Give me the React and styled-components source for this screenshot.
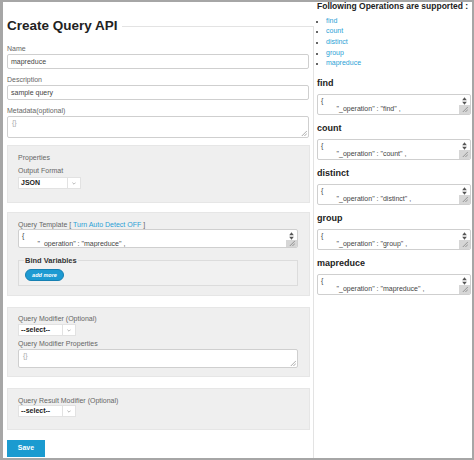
import React from 'react';
import styled, { createGlobalStyle } from 'styled-components';

const GlobalStyle = createGlobalStyle`
  html, body {
    margin: 0;
    padding: 0;
    background: #fff;
  }
  body {
    font-family: "Liberation Sans", Arial, sans-serif;
  }
  * {
    box-sizing: border-box;
  }
`;

const Frame = styled.div`
  width: 474px;
  height: 460px;
  border: 2px solid #a6a6a6;
  border-left-width: 3px;
  display: flex;
  overflow: hidden;
  background: #fff;
`;

const LeftColumn = styled.div`
  width: 311px;
  flex-shrink: 0;
`;

const FormSet = styled.fieldset`
  margin: 16px 0 0;
  height: calc(100% - 16px);
  min-width: 0;
  border: 0;
  border-top: 1px solid #e3e3e3;
  border-right: 1px solid #e3e3e3;
  padding: 10px 2px 0 4px;
`;

const Title = styled.legend`
  margin-left: -4px;
  padding: 0 4px;
  font-size: 13.5px;
  line-height: 16px;
  font-weight: bold;
  color: #222;
`;

const Label = styled.div`
  margin-top: ${(p) => p.$mt || 0}px;
  font-size: 7px;
  line-height: 9px;
  color: #666;
  white-space: nowrap;
`;

const LinkText = styled.span`
  color: #2b9fd6;
`;

const Input = styled.div`
  margin-top: 1px;
  width: calc(100% - 2px);
  height: 15px;
  border: 1px solid #cfcfcf;
  border-radius: 2px;
  padding: 0 3px;
  font-size: 7px;
  line-height: 13px;
  color: #444;
  background: #fff;
`;

const TextBox = styled.div`
  margin-top: ${(p) => p.$mt || 0}px;
  width: ${(p) => p.$width || '100%'};
  height: ${(p) => p.$height}px;
  border: 1px solid #cfcfcf;
  border-radius: 2px;
  background: #fff;
  display: flex;
  justify-content: space-between;
  overflow: hidden;
`;

const Placeholder = styled.div`
  padding: 2px 4px;
  font-size: 7px;
  line-height: 8px;
  color: #aaa;
`;

const Grip = styled.svg`
  align-self: flex-end;
  flex-shrink: 0;
  margin: 0 1px 1px 0;
`;

const CodeText = styled.div`
  flex: 1;
  padding: 1.5px 3px;
  font-size: 7px;
  line-height: 8px;
  color: #444;
  white-space: pre;
  tab-size: 8;
  overflow: hidden;
`;

const Squiggle = styled.span`
  text-decoration: underline;
  text-decoration-color: #8a3a3a;
  text-underline-offset: 1px;
`;

const Gutter = styled.div`
  width: 11px;
  flex-shrink: 0;
  display: flex;
  flex-direction: column;
`;

const Arrows = styled.div`
  flex: 1;
  display: flex;
  align-items: flex-start;
  justify-content: center;
  padding-top: 2px;
`;

const GripCell = styled.div`
  height: 10px;
  background: #d6d6d6;
  display: flex;
  align-items: flex-end;
  justify-content: flex-end;
  padding: 0 1px 1px 0;
`;

const Panel = styled.div`
  margin-top: ${(p) => p.$mt}px;
  margin-right: 1px;
  background: #efefef;
  border: 1px solid #e6e6e6;
  padding: ${(p) => p.$top}px 11px ${(p) => p.$bottom}px 10px;
`;

const Select = styled.div`
  margin-top: ${(p) => p.$mt || 0}px;
  width: ${(p) => p.$width}px;
  height: 12px;
  display: flex;
  background: #fff;
  border: 1px solid #e2e2e2;
`;

const SelectValue = styled.div`
  flex: 1;
  padding-left: 2px;
  font-size: 7px;
  line-height: 10px;
  font-weight: bold;
  color: #222;
  border-right: 1px solid #e2e2e2;
`;

const SelectCaret = styled.div`
  width: 12px;
  display: flex;
  align-items: center;
  justify-content: center;
`;

const BindSet = styled.fieldset`
  margin: 8px 0 0;
  min-width: 0;
  border: 1px solid #dcdcdc;
  padding: 4px 6px 4px;
  background: #f1f1f1;
`;

const BindLegend = styled.legend`
  padding: 0 1px;
  margin-left: -1px;
  font-size: 7.5px;
  line-height: 9px;
  font-weight: bold;
  color: #333;
`;

const PillButton = styled.button`
  display: block;
  width: 39px;
  height: 12px;
  padding: 0;
  border: 1px solid #1680b2;
  border-radius: 7px;
  background: #1d9ad2;
  color: #fff;
  font-family: "Liberation Sans", Arial, sans-serif;
  font-size: 5.5px;
  font-style: italic;
  font-weight: bold;
  line-height: 10px;
`;

const SaveButton = styled.button`
  display: block;
  margin-top: 10px;
  width: 38px;
  height: 17px;
  padding: 0 0 2px;
  border: 0;
  background: #1b9bd0;
  color: #fff;
  font-family: "Liberation Sans", Arial, sans-serif;
  font-size: 7px;
  font-weight: bold;
`;

const RightColumn = styled.div`
  flex: 1;
  min-width: 0;
  padding-left: 3px;
`;

const SideHeader = styled.div`
  font-size: 8.5px;
  line-height: 8px;
  font-weight: bold;
  color: #222;
  white-space: nowrap;
`;

const OpList = styled.ul`
  margin: 5.5px 0 0;
  padding-left: 9px;
  list-style: disc;
  font-size: 7px;
  line-height: 10.7px;
  color: #222;
`;

const OpItem = styled.li`
  color: #2b9fd6;
  &::marker {
    color: #333;
    font-size: 6px;
  }
`;

const OpBlock = styled.div`
  margin-top: ${(p) => (p.$first ? 8.5 : 7.5)}px;
`;

const OpTitle = styled.div`
  font-size: 9px;
  line-height: 11px;
  font-weight: bold;
  color: #222;
`;

const ResizeIcon = ({ color = '#8a8a8a' }) => (
  <Grip width="6" height="6" viewBox="0 0 6 6">
    <line x1="6" y1="0.8" x2="0.8" y2="6" stroke={color} strokeWidth="0.7" />
    <line x1="6" y1="3.4" x2="3.4" y2="6" stroke={color} strokeWidth="0.7" />
  </Grip>
);

const SpinIcon = () => (
  <svg width="5" height="8" viewBox="0 0 5 8">
    <path d="M2.5 0.3 L4.8 3.2 L0.2 3.2 Z" fill="#555" />
    <path d="M0.2 4.8 L4.8 4.8 L2.5 7.7 Z" fill="#555" />
  </svg>
);

const CaretIcon = () => (
  <svg width="4" height="3" viewBox="0 0 4 3">
    <path d="M0.4 0.6 L2 2.2 L3.6 0.6" stroke="#999" strokeWidth="0.7" fill="none" />
  </svg>
);

const CodeArea = ({ height, width, mt, children }) => (
  <TextBox $height={height} $width={width} $mt={mt}>
    <CodeText>{children}</CodeText>
    <Gutter>
      <Arrows>
        <SpinIcon />
      </Arrows>
      <GripCell>
        <ResizeIcon color="#777" />
      </GripCell>
    </Gutter>
  </TextBox>
);

const Dropdown = ({ value, width, mt }) => (
  <Select $width={width} $mt={mt}>
    <SelectValue>{value}</SelectValue>
    <SelectCaret>
      <CaretIcon />
    </SelectCaret>
  </Select>
);

const operations = ['find', 'count', 'distinct', 'group', 'mapreduce'];

export default function App() {
  return (
    <>
      <GlobalStyle />
      <Frame>
        <LeftColumn>
          <FormSet>
            <Title>Create Query API</Title>

            <Label>Name</Label>
            <Input>mapreduce</Input>

            <Label $mt={6}>Description</Label>
            <Input>sample query</Input>

            <Label $mt={6}>Metadata(optional)</Label>
            <TextBox $height={22} $width="calc(100% - 2px)" $mt={1}>
              <Placeholder>{'{}'}</Placeholder>
              <ResizeIcon />
            </TextBox>

            <Panel $mt={7} $top={7} $bottom={13}>
              <Label>Properties</Label>
              <Label $mt={4}>Output Format</Label>
              <Dropdown value="JSON" width={63} mt={2} />
            </Panel>

            <Panel $mt={9} $top={7} $bottom={9}>
              <Label>
                Query Template [ <LinkText>Turn Auto Detect OFF</LinkText> ]
              </Label>
              <CodeArea height={19}>
                {'{\n\t"_operation" : "'}
                <Squiggle>mapreduce</Squiggle>
                {'" ,\n\t"_operation_spec" : {'}
              </CodeArea>
              <BindSet>
                <BindLegend>Bind Variables</BindLegend>
                <PillButton type="button">add more</PillButton>
              </BindSet>
            </Panel>

            <Panel $mt={11} $top={6} $bottom={8}>
              <Label>Query Modifier (Optional)</Label>
              <Dropdown value="--select--" width={58} mt={1} />
              <Label $mt={3}>Query Modifier Properties</Label>
              <TextBox $height={19} $mt={1}>
                <Placeholder>{'{}'}</Placeholder>
                <ResizeIcon />
              </TextBox>
            </Panel>

            <Panel $mt={11} $top={7} $bottom={12}>
              <Label>Query Result Modifier (Optional)</Label>
              <Dropdown value="--select--" width={58} />
            </Panel>

            <SaveButton type="button">Save</SaveButton>
          </FormSet>
        </LeftColumn>

        <RightColumn>
          <SideHeader>Following Operations are supported :</SideHeader>
          <OpList>
            {operations.map((op) => (
              <OpItem key={op}>{op}</OpItem>
            ))}
          </OpList>
          {operations.map((op, i) => (
            <OpBlock key={op} $first={i === 0}>
              <OpTitle>{op}</OpTitle>
              <CodeArea height={21} width="calc(100% - 1px)" mt={5.5}>
                {`{\n\t"_operation" : "${op}" ,\n\t"_operation_spec" : {`}
              </CodeArea>
            </OpBlock>
          ))}
        </RightColumn>
      </Frame>
    </>
  );
}
